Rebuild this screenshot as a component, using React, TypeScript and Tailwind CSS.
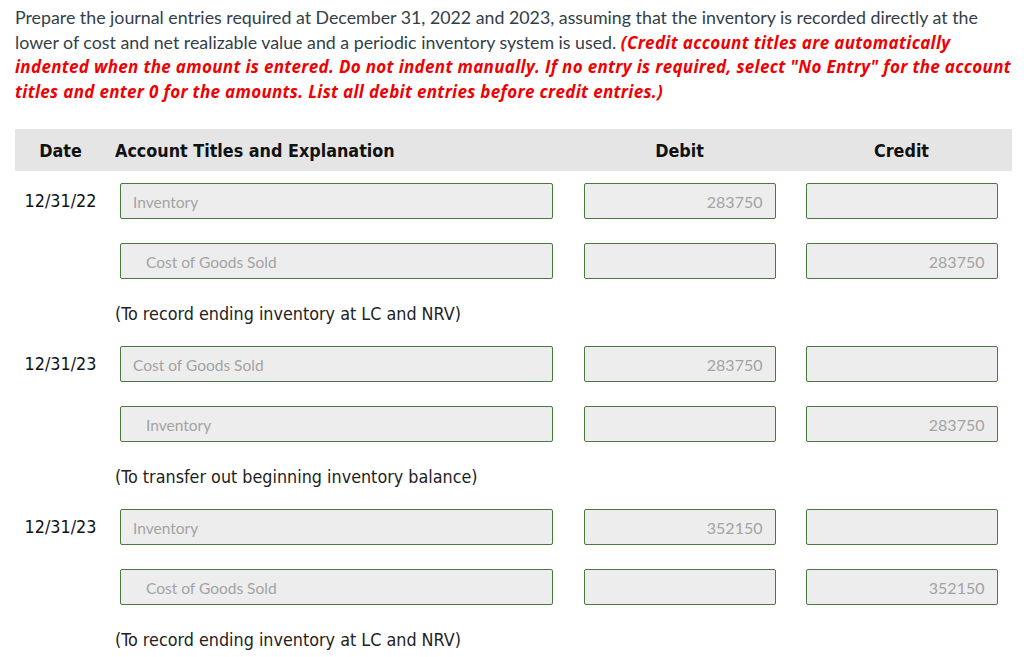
const tableFont = { fontFamily: '"DejaVu Sans Condensed", "DejaVu Sans", sans-serif' }

type Line = { account: string; debit?: string; credit?: string }
type Entry = { date: string; lines: Line[]; note: string }

const entries: Entry[] = [
  {
    date: '12/31/22',
    lines: [
      { account: 'Inventory', debit: '283750' },
      { account: 'Cost of Goods Sold', credit: '283750' },
    ],
    note: '(To record ending inventory at LC and NRV)',
  },
  {
    date: '12/31/23',
    lines: [
      { account: 'Cost of Goods Sold', debit: '283750' },
      { account: 'Inventory', credit: '283750' },
    ],
    note: '(To transfer out beginning inventory balance)',
  },
  {
    date: '12/31/23',
    lines: [
      { account: 'Inventory', debit: '352150' },
      { account: 'Cost of Goods Sold', credit: '352150' },
    ],
    note: '(To record ending inventory at LC and NRV)',
  },
]

function Field({ value, className, indent, right }: { value?: string; className: string; indent?: boolean; right?: boolean }) {
  return (
    <div
      className={`flex h-[36px] items-center rounded-[2px] border border-[#477a3c] bg-[#ededed] pt-[3px] font-['Lato'] text-[#a3a3a3] ${className} ${
        right ? 'justify-end pr-[12px] text-[16px]' : indent ? 'pl-[25px] text-[15.5px]' : 'pl-[12px] text-[15.5px]'
      }`}
    >
      {value}
    </div>
  )
}

export default function App() {
  return (
    <div className="min-h-screen bg-white">
      <div className="pl-[15px] pr-[4px] pt-[5px] font-['Lato'] text-[17.8px] leading-[24.7px] text-[#333e48]">
        Prepare the journal entries required at December 31, 2022 and 2023, assuming that the inventory is recorded directly at the
        lower of cost and net realizable value and a periodic inventory system is used.{' '}
        <span className="font-['Open_Sans'] text-[17px] font-bold italic leading-[20px] tracking-[0.32px] text-[#f00000]">
          (Credit account titles are automatically indented when the amount is entered. Do not indent manually. If no entry is required, select "No Entry" for the account titles and enter 0 for the amounts. List all debit entries before credit entries.)
        </span>
      </div>

      <div className="ml-[15px] mt-[25px] w-[997px] text-[#111]" style={tableFont}>
        {/* header */}
        <div className="flex h-[42px] items-center bg-[#e5e5e5] pt-[3px] text-[17.8px] font-bold">
          <div className="w-[91px] text-center">Date</div>
          <div className="w-[462px] pl-[9px]">Account Titles and Explanation</div>
          <div className="w-[223px] text-center">Debit</div>
          <div className="flex-1 text-center">Credit</div>
        </div>

        {entries.map((e, i) => (
          <div key={i} className="pt-[12px]">
            {e.lines.map((l, j) => (
              <div key={j} className={`flex items-center ${j > 0 ? 'mt-[24px]' : ''}`}>
                <div className="w-[91px] pt-[2px] text-center text-[17.8px]">{j === 0 ? e.date : ''}</div>
                <div className="w-[462px]">
                  <Field value={l.account} className="ml-[14px] w-[433px]" indent={j > 0} />
                </div>
                <div className="flex w-[223px] justify-center">
                  <Field value={l.debit} className="w-[192px]" right />
                </div>
                <div className="flex flex-1 justify-center">
                  <Field value={l.credit} className="w-[192px]" right />
                </div>
              </div>
            ))}
            <div className="ml-[100px] mt-[23px] h-[24px] text-[17.8px] leading-[24px] text-[#222]">{e.note}</div>
            <div className="h-[8px]" />
          </div>
        ))}
      </div>
    </div>
  )
}
